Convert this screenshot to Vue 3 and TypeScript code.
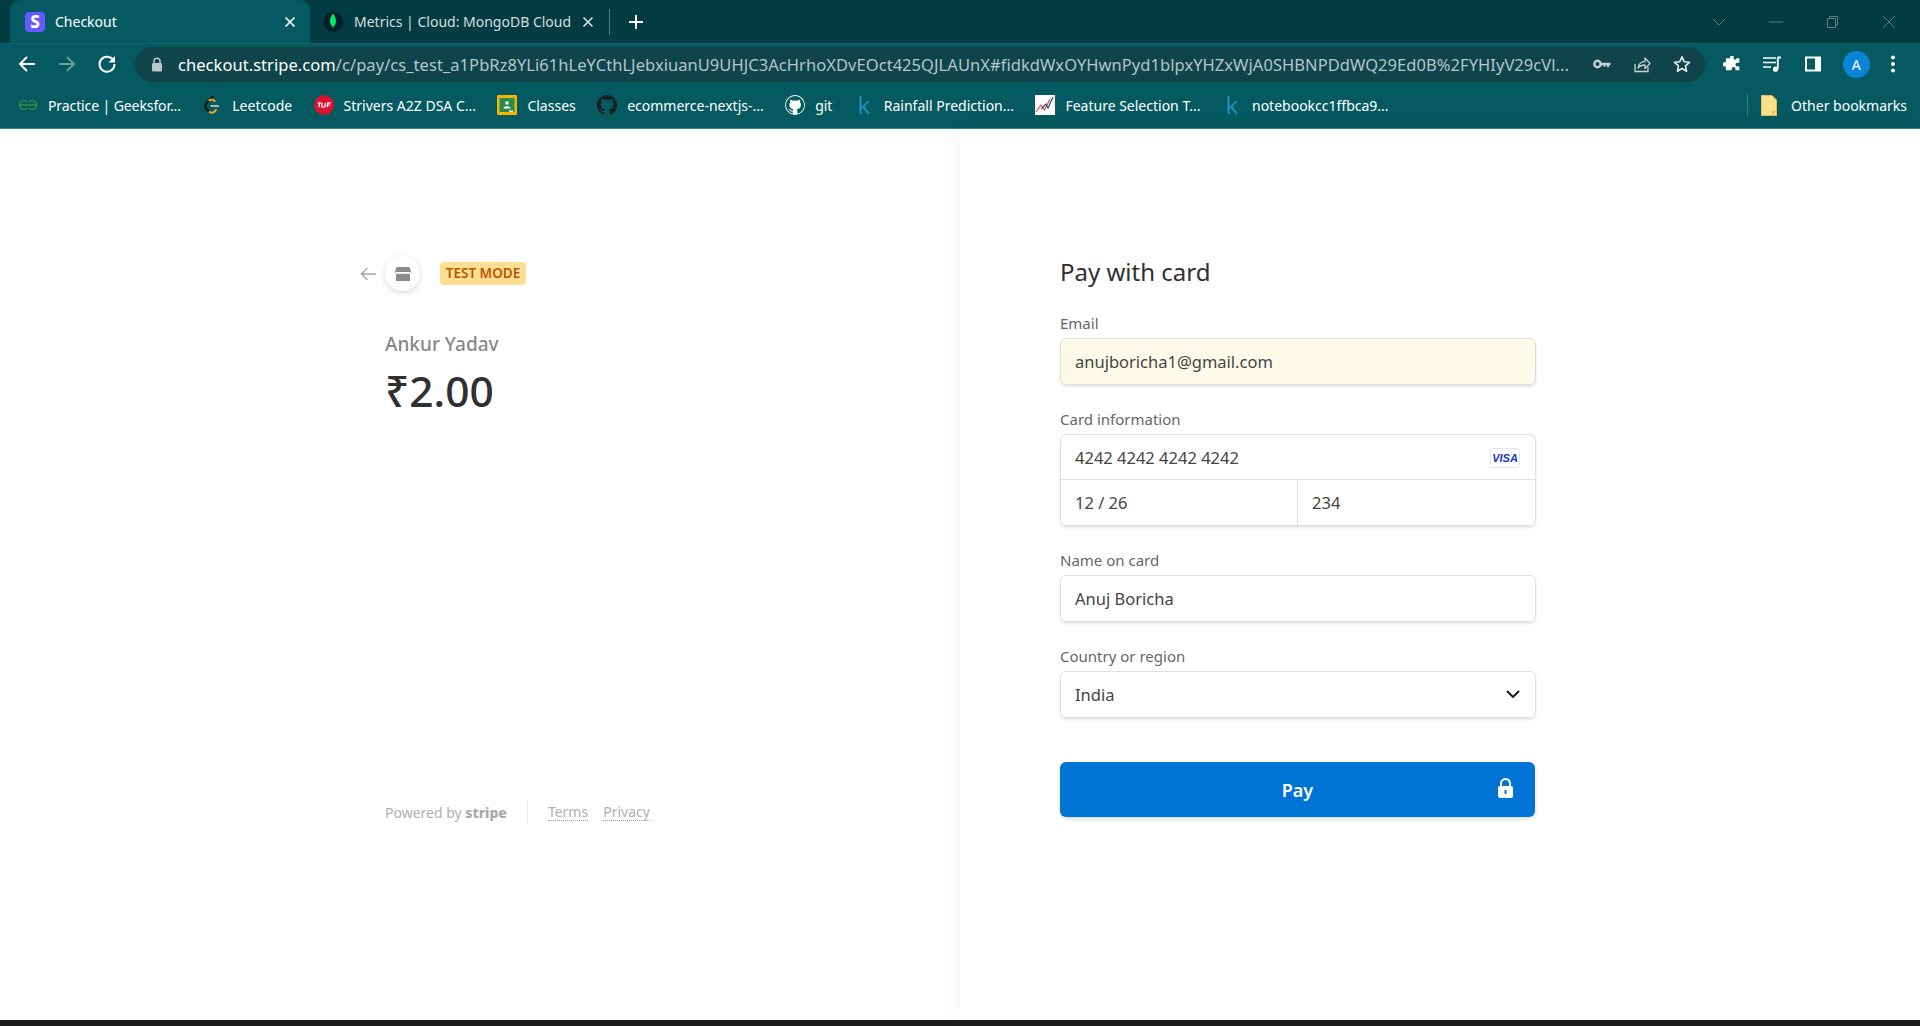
<template>
  <div class="page">
    <header class="chrome">
      <div class="tabstrip">
        <div class="tab active">
          <span class="fav-s">S</span>
          <span class="tab-title">Checkout</span>
          <svg class="tab-x" width="12" height="12" viewBox="0 0 12 12"><path d="M1.5 1.5l9 9M10.5 1.5l-9 9" stroke="#fff" stroke-width="1.7" /></svg>
        </div>
        <div class="tab other">
          <svg width="20" height="20" viewBox="0 0 20 20"><circle cx="10" cy="10" r="10" fill="#001e2b" /><path d="M10 1.500c2.200 3 3.200 5.600 3 8.200-.2 2.600-1.500 4-2.600 5L10 18l-.4-3.300C8.500 13.700 7.200 12.300 7 9.700 6.800 7.100 7.800 4.500 10 1.500z" fill="#00ed64" /></svg>
          <span class="tab-title dim">Metrics | Cloud: MongoDB Cloud</span>
          <svg class="tab-x" width="12" height="12" viewBox="0 0 12 12"><path d="M1.500 1.500l9 9M10.500 1.500l-9 9" stroke="#d5dedf" stroke-width="1.600" /></svg>
        </div>
        <span class="tab-sep"></span>
        <svg class="plus" width="16" height="16" viewBox="0 0 16 16"><path d="M8 1v14M1 8h14" stroke="#fff" stroke-width="2" /></svg>
        <div class="win-controls">
          <svg width="14" height="14" viewBox="0 0 14 14"><path d="M1 4l6 6 6-6" fill="none" stroke="#5d8085" /></svg>
          <svg width="14" height="14" viewBox="0 0 14 14"><path d="M0 7h14" stroke="#5d8085" /></svg>
          <svg width="14" height="14" viewBox="0 0 14 14"><path d="M2.500 3.500h8v9h-8zM4.500 3.500v-2h8v8.500h-2" fill="none" stroke="#5d8085" /></svg>
          <svg width="14" height="14" viewBox="0 0 14 14"><path d="M1 1l12 12M13 1L1 13" stroke="#5d8085" /></svg>
        </div>
      </div>

      <div class="toolbar">
        <button class="nav-btn">
          <svg width="18" height="18" viewBox="0 0 18 18"><path d="M17 9H2.500M9 2L2 9l7 7" fill="none" stroke="#fff" stroke-width="2" /></svg>
        </button>
        <button class="nav-btn">
          <svg width="18" height="18" viewBox="0 0 18 18"><path d="M1 9h14.500M9 2l7 7-7 7" fill="none" stroke="#6f9a9d" stroke-width="2" /></svg>
        </button>
        <button class="nav-btn">
          <svg width="20" height="20" viewBox="0 0 20 20"><path d="M16.500 6.500A7.500 7.500 0 1 0 17.500 10" fill="none" stroke="#fff" stroke-width="2" /><path d="M18 2v6.500h-6.500z" fill="#fff" /></svg>
        </button>
        <div class="omnibox">
          <svg class="lock" width="12" height="15" viewBox="0 0 12 15"><path d="M3 6V4.200a3 3 0 0 1 6 0V6" fill="none" stroke="#b8c6c8" stroke-width="1.500" /><rect x="1" y="6" width="10" height="8.500" rx="1.200" fill="#b8c6c8" /></svg>
          <span class="url"><span class="host">checkout.stripe.com</span>/c/pay/cs_test_a1PbRz8YLi61hLeYCthLJebxiuanU9UHJC3AcHrhoXDvEOct425QJLAUnX#fidkdWxOYHwnPyd1blpxYHZxWjA0SHBNPDdWQ29Ed0B%2FYHIyV29cVl...</span>
          <svg class="omni-icon" width="18" height="10" viewBox="0 0 18 10"><circle cx="4.500" cy="5" r="3.200" fill="none" stroke="#c6d2d3" stroke-width="2.400" /><path d="M8 3.800h9.500v2.400H16v2h-2v-2h-1.500v1.600h-2V6.200H8z" fill="#c6d2d3" /></svg>
          <svg class="omni-icon" width="18" height="18" viewBox="0 0 18 18"><path d="M2 9v7.500h13V12" fill="none" stroke="#c6d2d3" stroke-width="1.300" /><path d="M5 13c.5-4 3.500-6.500 7-6.500V3l5 5.500-5 5V10c-3 0-5.500 1-7 3z" fill="none" stroke="#c6d2d3" stroke-width="1.300" stroke-linejoin="round" /></svg>
          <svg class="omni-icon star" width="18" height="18" viewBox="0 0 18 18"><path d="M9 1.800l2.200 4.900 5.300.6-4 3.600 1.100 5.300L9 13.500l-4.600 2.700 1.100-5.300-4-3.600 5.300-.6z" fill="none" stroke="#e4eaea" stroke-width="1.600" stroke-linejoin="round" /></svg>
        </div>
        <div class="tool-icons">
          <svg width="18" height="18" viewBox="0 0 18 18"><path d="M7 1.500h3.500v2.500a1.500 1.500 0 0 0 3 0h0v0h3v4.500h-2a2 2 0 0 0 0 4h2v4h-4v-1.500a2 2 0 0 0-4 0v1.500H2.500v-4H1a2.200 2.200 0 0 1 0-4.400h1.500V4H7z" fill="#fff" transform="translate(0.500 -0.500) scale(.96)" /></svg>
          <svg width="20" height="18" viewBox="0 0 20 18"><path d="M1 3h13M1 7.500h13M1 12h8" stroke="#fff" stroke-width="1.700" /><path d="M15.500 2.500h3.500M15.800 2.500V14" stroke="#fff" stroke-width="1.800" fill="none" /><circle cx="13.500" cy="14.200" r="2.600" fill="#fff" /></svg>
          <svg width="18" height="18" viewBox="0 0 18 18"><rect x="1" y="1.500" width="16" height="15" fill="#fff" /><rect x="3" y="3.500" width="8" height="11" fill="#045a60" /></svg>
          <span class="avatar">A</span>
          <svg width="4" height="18" viewBox="0 0 4 18"><circle cx="2" cy="2.500" r="2" fill="#fff" /><circle cx="2" cy="9" r="2" fill="#fff" /><circle cx="2" cy="15.500" r="2" fill="#fff" /></svg>
        </div>
      </div>

      <nav class="bookmarks">
        <a class="bm first">
          <svg width="20" height="12" viewBox="0 0 20 12"><path d="M1 6h18M1.500 6a4.200 4.200 0 0 1 7.500-2.800M9 8.800A4.200 4.200 0 0 1 1.500 6M18.500 6A4.200 4.200 0 0 0 11 3.200M11 8.800A4.200 4.200 0 0 0 18.500 6" fill="none" stroke="#2f8d46" stroke-width="1.300" /></svg>
          <span>Practice | Geeksfor...</span>
        </a>
        <a class="bm">
          <svg width="20" height="20" viewBox="-2 0 20 20"><path d="M9.500 1L2.500 8.500c-1.500 1.700-1.500 4 0 5.500L5 16.500" fill="none" stroke="#111" stroke-width="2" /><path d="M5 16.500c1.600 1.600 4 1.600 5.500 0l2-2M4.500 5.500l4-1 3 2" fill="none" stroke="#f5a11c" stroke-width="2" /><path d="M6.500 11h8.500" stroke="#b3b3b3" stroke-width="2" /></svg>
          <span>Leetcode</span>
        </a>
        <a class="bm">
          <svg width="20" height="20" viewBox="0 0 20 20"><circle cx="10" cy="10" r="10" fill="#d8122f" /><path d="M3.800 7.800h3.600M5.600 7.800l-.8 4.400M8.300 7.800l-.5 3a1 1 0 0 0 1 1.400h1a1.200 1.200 0 0 0 1.200-1l.5-3.400M13 12.200l.8-4.400h3M13.400 10h2.800" fill="none" stroke="#fff" stroke-width="1.200" /></svg>
          <span>Strivers A2Z DSA C...</span>
        </a>
        <a class="bm">
          <svg width="20" height="20" viewBox="0 0 20 20"><rect width="20" height="20" rx="1" fill="#f4b400" /><rect x="2.500" y="3" width="15" height="14" fill="#2a8c4a" /><circle cx="10" cy="8" r="1.800" fill="#fff" /><path d="M6.500 13.500c.5-3 6.500-3 7 0z" fill="#fff" /><path d="M12 17h4v-1.500h-4z" fill="#f4f4f4" /></svg>
          <span>Classes</span>
        </a>
        <a class="bm">
          <svg width="20" height="20" viewBox="0 0 16 16"><path d="M8 0C3.580 0 0 3.580 0 8c0 3.540 2.290 6.530 5.470 7.590.4.070.55-.17.55-.38 0-.19-.010-.82-.010-1.490-2.010.37-2.530-.49-2.690-.94-.090-.23-.48-.94-.82-1.130-.28-.15-.68-.52-.010-.53.630-.010 1.080.58 1.230.82.720 1.210 1.870.87 2.330.66.070-.52.280-.87.510-1.070-1.780-.2-3.640-.89-3.640-3.950 0-.87.310-1.590.82-2.150-.080-.2-.36-1.020.080-2.120 0 0 .67-.21 2.200.82.640-.18 1.320-.27 2-.27s1.360.09 2 .27c1.530-1.040 2.200-.82 2.200-.82.440 1.100.160 1.920.080 2.120.51.560.82 1.270.82 2.150 0 3.070-1.870 3.750-3.650 3.950.290.250.54.730.54 1.480 0 1.070-.010 1.930-.010 2.200 0 .21.150.46.550.38A8.010 8.010 0 0 0 16 8c0-4.420-3.580-8-8-8z" fill="#1b1f23" /></svg>
          <span>ecommerce-nextjs-...</span>
        </a>
        <a class="bm">
          <svg width="20" height="20" viewBox="0 0 16 16"><circle cx="8" cy="8" r="8" fill="#fff" /><path d="M8 .8C4 .8.800 4 .800 8c0 3.200 2 5.900 4.900 6.800.4.100.5-.1.500-.3v-1.300c-2 .4-2.400-.9-2.400-.9-.3-.8-.8-1-.8-1-.6-.4.100-.4.100-.4.700 0 1.100.7 1.100.7.600 1.100 1.700.8 2.100.6.100-.5.200-.8.500-1-1.600-.2-3.300-.8-3.300-3.500 0-.8.300-1.400.7-1.900-.1-.2-.3-.9.100-1.900 0 0 .6-.2 2 .7.600-.2 1.200-.2 1.800-.2s1.200.1 1.800.2c1.400-.9 2-.7 2-.7.400 1 .2 1.700.1 1.900.5.500.7 1.100.7 1.900 0 2.800-1.700 3.400-3.300 3.500.3.200.5.600.5 1.300v2c0 .2.100.4.500.3 2.900-.9 4.900-3.600 4.900-6.800C15.200 4 12 .8 8 .8z" fill="#045a60" /></svg>
          <span>git</span>
        </a>
        <a class="bm">
          <span class="kaggle">k</span>
          <span>Rainfall Prediction...</span>
        </a>
        <a class="bm">
          <svg width="20" height="20" viewBox="0 0 20 20"><rect width="20" height="20" fill="#fff" /><path d="M1 17l5-7 3.500 5L15 4" fill="none" stroke="#d9534a" stroke-width="1.200" /><path d="M6 14l5-5 2 4 5-11" fill="none" stroke="#2b4a7a" stroke-width="1.200" /></svg>
          <span>Feature Selection T...</span>
        </a>
        <a class="bm">
          <span class="kaggle">k</span>
          <span>notebookcc1ffbca9...</span>
        </a>
        <div class="other-bm">
          <svg width="16" height="21" viewBox="0 0 16 21"><path d="M.500.500h10.500l4.500 4.500v15.500H.500z" fill="#fbe08a" stroke="#e0bd55" /><path d="M11 20l4-4h-4z" fill="#e0bd55" /></svg>
          <span>Other bookmarks</span>
        </div>
      </nav>
    </header>

    <main class="checkout">
      <section class="summary">
        <div class="summary-head">
          <svg class="back" width="16" height="14" viewBox="0 0 16 14"><path d="M16 7H1.500M7.500 1L1.500 7l6 6" fill="none" stroke="#a8a8a8" stroke-width="1.500" /></svg>
          <span class="store">
            <svg width="16" height="14" viewBox="0 0 16 14"><path d="M1.500 0h13L16 4.500c0 .8-.6 1.500-1.500 1.500h-13C.6 6 0 5.300 0 4.500z" fill="#8c8c8c" /><path d="M1 6.800h14V14H1z" fill="#8c8c8c" /><path d="M1 5h14v1.200H1z" fill="#fff" /></svg>
          </span>
          <span class="test-badge">TEST MODE</span>
        </div>
        <div class="merchant">Ankur Yadav</div>
        <div class="amount">₹2.00</div>
        <footer class="legal">
          <span class="powered">Powered by <b>stripe</b></span>
          <span class="legal-sep"></span>
          <a>Terms</a>
          <a>Privacy</a>
        </footer>
      </section>

      <section class="pay">
        <h1>Pay with card</h1>
        <div class="field">
          <label>Email</label>
          <div class="input autofill">anujboricha1@gmail.com</div>
        </div>
        <div class="field">
          <label>Card information</label>
          <div class="card-box">
            <div class="card-row">
              <span>4242 4242 4242 4242</span>
              <span class="visa">VISA</span>
            </div>
            <div class="card-split">
              <span>12 / 26</span>
              <span>234</span>
            </div>
          </div>
        </div>
        <div class="field">
          <label>Name on card</label>
          <div class="input">Anuj Boricha</div>
        </div>
        <div class="field">
          <label>Country or region</label>
          <div class="input select">
            <span>India</span>
            <svg width="14" height="9" viewBox="0 0 14 9"><path d="M1 1l6 6 6-6" fill="none" stroke="#111" stroke-width="1.800" /></svg>
          </div>
        </div>
        <button class="pay-btn">
          Pay
          <svg class="pay-lock" width="17" height="20" viewBox="0 0 17 20"><path d="M4 9V5.500a4.500 4.500 0 0 1 9 0V9" fill="none" stroke="#fff" stroke-width="2" /><rect x="1" y="8" width="15" height="12" rx="2" fill="#fff" /><rect x="7.500" y="12" width="2" height="4" fill="#0074d4" /></svg>
        </button>
      </section>
    </main>
    <div class="taskbar"></div>
  </div>
</template>

<script setup lang="ts">
</script>

<style>
html, body {
  margin: 0;
  background: #fff;
}
</style>

<style scoped>
.page {
  width: 1920px;
  height: 1026px;
  display: flex;
  flex-direction: column;
  overflow: hidden;
  font-family: "Noto Sans", "Open Sans", sans-serif;
}

.chrome {
  height: 129px;
  flex: none;
  color: #fff;
  background: #045a60;
}

.tabstrip {
  height: 43px;
  background: #023b42;
  display: flex;
  align-items: center;
  padding-left: 10px;
}
.tab {
  height: 43px;
  box-sizing: border-box;
  display: flex;
  align-items: center;
  font-size: 14px;
}
.tab.active {
  width: 300px;
  background: #045a60;
  border-radius: 10px 10px 0 0;
  padding: 0 14px 0 15px;
}
.tab.other {
  width: 299px;
  padding: 0 15px 0 13px;
}
.tab-title {
  flex: 1;
  margin-left: 10px;
  white-space: nowrap;
}
.dim {
  color: #d5dedf;
  margin-left: 11px;
}
.fav-s {
  width: 20px;
  height: 20px;
  border-radius: 4px;
  background: #635bff;
  color: #fff;
  font-size: 17px;
  font-weight: 800;
  line-height: 20px;
  text-align: center;
}
.tab-sep {
  width: 1px;
  height: 26px;
  background: #5d8085;
}
.plus {
  margin-left: 18px;
}
.win-controls {
  margin-left: auto;
  width: 184px;
  padding-right: 24px;
  display: flex;
  justify-content: space-between;
  align-items: center;
}

.toolbar {
  height: 41px;
  display: flex;
  align-items: center;
  padding: 0 25px 0 7px;
  border-top: 1px solid #0a666c;
  box-sizing: border-box;
}
.nav-btn {
  width: 40px;
  height: 36px;
  padding: 0;
  border: 0;
  background: none;
  display: flex;
  align-items: center;
  justify-content: center;
}
.omnibox {
  flex: none;
  width: 1570px;
  height: 35px;
  margin-left: 8px;
  border-radius: 18px;
  background: #0f444b;
  display: flex;
  align-items: center;
  box-sizing: border-box;
  padding: 0 14px 0 16px;
}
.lock {
  flex: none;
}
.url {
  flex: 1;
  margin-left: 15px;
  white-space: nowrap;
  overflow: hidden;
  font-size: 16.500px;
  letter-spacing: 0.05px;
  color: #b3c6c8;
}
.host {
  color: #fff;
}
.omni-icon {
  flex: none;
  margin-left: 22px;
}
.tool-icons {
  flex: 1;
  display: flex;
  align-items: center;
  justify-content: space-between;
  padding-left: 18px;
}
.avatar {
  width: 27px;
  height: 27px;
  border-radius: 50%;
  background: #0a84d6;
  font-size: 14px;
  line-height: 27px;
  text-align: center;
}

.bookmarks {
  height: 45px;
  box-sizing: border-box;
  display: flex;
  align-items: center;
  padding: 0 13px 2px 18px;
  gap: 21.400px;
  border-bottom: 1px solid #3b8085;
  font-size: 14px;
}
.bm {
  display: flex;
  align-items: center;
  gap: 10px;
  white-space: nowrap;
}
.first span {
  letter-spacing: -0.1px;
}
.kaggle {
  width: 20px;
  color: #1a8fc4;
  font-size: 24px;
  line-height: 20px;
  text-align: center;
}
.other-bm {
  margin-left: auto;
  display: flex;
  align-items: center;
  gap: 14px;
  height: 22px;
  padding-left: 13px;
  border-left: 1px solid #3b7c81;
}

.checkout {
  flex: 1;
  display: flex;
  background: #fff;
}
.summary {
  width: 960px;
  box-sizing: border-box;
  padding: 127px 0 0 360px;
  display: flex;
  flex-direction: column;
}
.summary-head {
  height: 35px;
  display: flex;
  align-items: center;
}
.back {
  margin-right: 9px;
}
.store {
  width: 35px;
  height: 35px;
  border-radius: 50%;
  background: #fff;
  box-shadow: 0 2px 6px rgba(0, 0, 0, 0.14);
  display: flex;
  align-items: center;
  justify-content: center;
}
.test-badge {
  margin-left: 20px;
  width: 86px;
  height: 23px;
  border-radius: 4px;
  background: #ffde92;
  color: #bb5504;
  font-size: 13.500px;
  font-weight: 600;
  line-height: 23px;
  text-align: center;
  white-space: nowrap;
}
.merchant {
  margin: 41px 0 0 25px;
  font-size: 19px;
  font-weight: 500;
  color: rgba(26, 26, 26, 0.55);
  line-height: 24px;
}
.amount {
  margin: 10px 0 0 25px;
  font-size: 42.500px;
  font-weight: 500;
  color: #303030;
  line-height: 50px;
}
.legal {
  margin: 385px 0 0 25px;
  height: 22px;
  display: flex;
  align-items: center;
  font-size: 14px;
  color: #b0b0b0;
}
.powered b {
  font-size: 14px;
  font-weight: 800;
  color: #a8a8a8;
}
.legal-sep {
  width: 1px;
  height: 22px;
  margin: 0 20px 0 20px;
  background: #e8e8e8;
}
.legal a {
  margin-right: 15px;
  border-bottom: 1px dotted #999;
  line-height: 16px;
}

.pay {
  flex: 1;
  box-sizing: border-box;
  padding: 129px 0 0 100px;
  box-shadow: 0 0 25px rgba(0, 0, 0, 0.05);
  background: #fff;
}
.pay h1 {
  margin: 0 0 28px;
  font-size: 24px;
  font-weight: 400;
  line-height: 28px;
  color: #303030;
}
.field {
  width: 475px;
  margin-bottom: 25px;
}
.field label {
  display: block;
  height: 17px;
  margin-bottom: 7px;
  font-size: 15px;
  font-weight: 400;
  line-height: 19px;
  color: #666;
}
.input,
.card-box {
  box-sizing: border-box;
  margin-right: -1px;
  border: 1px solid #e0e0e0;
  border-radius: 6px;
  box-shadow: 0 2px 3px rgba(0, 0, 0, 0.1);
  font-size: 16.500px;
  color: #444;
}
.input {
  height: 47px;
  display: flex;
  align-items: center;
  padding: 0 14px;
}
.autofill {
  background: #fefae8;
}
.select {
  justify-content: space-between;
  padding-right: 15px;
}
.card-box {
  height: 92px;
}
.card-row {
  height: 45px;
  display: flex;
  align-items: center;
  justify-content: space-between;
  padding: 0 15px 0 14px;
  box-sizing: border-box;
  border-bottom: 1px solid #e0e0e0;
}
.visa {
  width: 30px;
  height: 20px;
  margin-top: 2px;
  box-sizing: border-box;
  border: 1px solid #e6e6e6;
  border-radius: 3px;
  font-family: "Liberation Sans", sans-serif;
  font-size: 11px;
  font-weight: 700;
  font-style: italic;
  line-height: 18px;
  text-align: center;
  color: #1a35b8;
}
.card-split {
  height: 45px;
  display: flex;
}
.card-split span {
  flex: 1;
  padding: 0 14px;
  line-height: 45px;
}
.card-split span:first-child {
  flex: 0 0 208px;
}
.card-split span + span {
  border-left: 1px solid #e0e0e0;
}
.pay-btn {
  position: relative;
  width: 475px;
  height: 55px;
  margin-top: 19px;
  border: 0;
  border-radius: 6px;
  background: #0074d4;
  box-shadow: 0 2px 4px rgba(0, 0, 0, 0.14);
  color: #fff;
  font: 600 18px "Noto Sans", sans-serif;
}
.pay-lock {
  position: absolute;
  right: 21px;
  top: 16px;
}
.taskbar {
  height: 6px;
  flex: none;
  background: #1c1c1c;
}
</style>
